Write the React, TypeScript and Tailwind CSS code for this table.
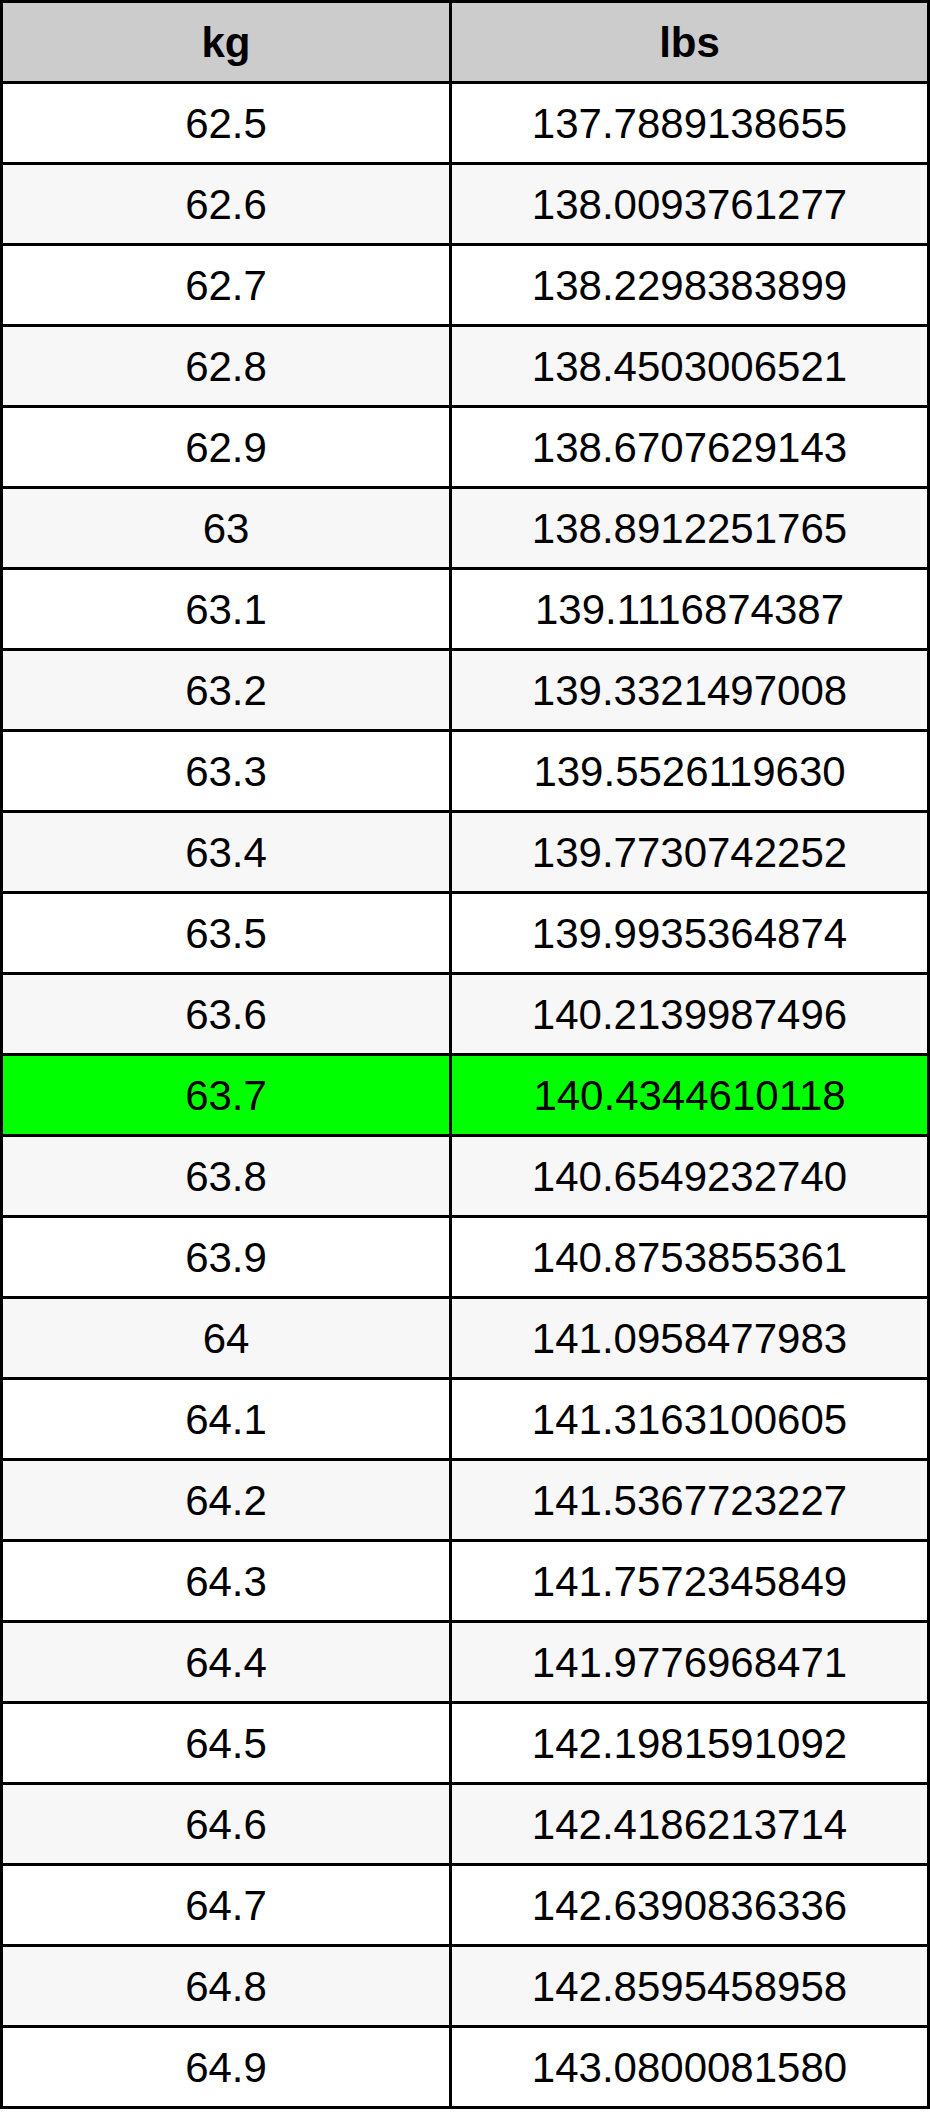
const ROWS: [string, string][] = [
  ["62.5", "137.7889138655"],
  ["62.6", "138.0093761277"],
  ["62.7", "138.2298383899"],
  ["62.8", "138.4503006521"],
  ["62.9", "138.6707629143"],
  ["63", "138.8912251765"],
  ["63.1", "139.1116874387"],
  ["63.2", "139.3321497008"],
  ["63.3", "139.5526119630"],
  ["63.4", "139.7730742252"],
  ["63.5", "139.9935364874"],
  ["63.6", "140.2139987496"],
  ["63.7", "140.4344610118"],
  ["63.8", "140.6549232740"],
  ["63.9", "140.8753855361"],
  ["64", "141.0958477983"],
  ["64.1", "141.3163100605"],
  ["64.2", "141.5367723227"],
  ["64.3", "141.7572345849"],
  ["64.4", "141.9776968471"],
  ["64.5", "142.1981591092"],
  ["64.6", "142.4186213714"],
  ["64.7", "142.6390836336"],
  ["64.8", "142.8595458958"],
  ["64.9", "143.0800081580"],
];

const HIGHLIGHT = "63.7";

export default function App() {
  return (
    <div className="min-h-[2115px] bg-white font-['Liberation_Sans',Arial,sans-serif] text-[42px] text-black">
      <div className="w-[930px] border-[3px] border-black">
        {/* header */}
        <div className="flex h-[81px] border-b-[3px] border-black bg-[#cccccc] font-bold">
          <div className="flex w-[449px] items-center justify-center border-r-[3px] border-black">kg</div>
          <div className="flex flex-1 items-center justify-center">lbs</div>
        </div>
        {ROWS.map(([kg, lbs], i) => {
          const last = i === ROWS.length - 1;
          const bg = kg === HIGHLIGHT ? "bg-[#00ff00]" : i % 2 === 1 ? "bg-[#f7f7f7]" : "bg-white";
          return (
            <div
              key={kg}
              className={`flex ${bg} ${last ? "h-[78px]" : "h-[81px] border-b-[3px] border-black"}`}
            >
              <div className="flex w-[449px] items-center justify-center border-r-[3px] border-black">{kg}</div>
              <div className="flex flex-1 items-center justify-center">{lbs}</div>
            </div>
          );
        })}
      </div>
    </div>
  );
}
